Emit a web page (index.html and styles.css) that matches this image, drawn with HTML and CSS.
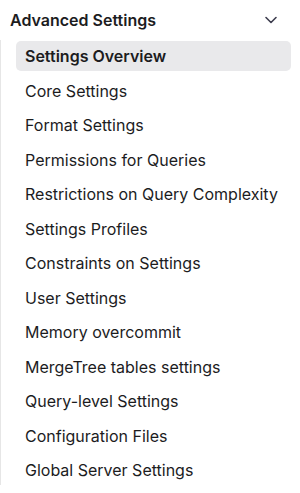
FILE: index.html
```html
<!DOCTYPE html>
<html lang="en">
<head>
  <meta charset="UTF-8">
  <meta name="viewport" content="width=device-width, initial-scale=1.0">
  <title>Advanced Settings</title>
  <link rel="stylesheet" href="styles.css">
</head>
<body>
  <div class="sidebar">
    <div class="group-header">
      <span class="group-title">Advanced Settings</span>
      <svg class="chevron" width="16" height="16" viewBox="0 0 16 16" fill="none">
        <path d="M3 5.5 L8 10.5 L13 5.5" stroke="#3d3d4e" stroke-width="1.6" stroke-linecap="round" stroke-linejoin="round"/>
      </svg>
    </div>
    <ul class="menu">
      <li class="menu-item active">Settings Overview</li>
      <li class="menu-item">Core Settings</li>
      <li class="menu-item">Format Settings</li>
      <li class="menu-item">Permissions for Queries</li>
      <li class="menu-item">Restrictions on Query Complexity</li>
      <li class="menu-item">Settings Profiles</li>
      <li class="menu-item">Constraints on Settings</li>
      <li class="menu-item">User Settings</li>
      <li class="menu-item">Memory overcommit</li>
      <li class="menu-item">MergeTree tables settings</li>
      <li class="menu-item">Query-level Settings</li>
      <li class="menu-item">Configuration Files</li>
      <li class="menu-item">Global Server Settings</li>
    </ul>
  </div>
</body>
</html>
```

FILE: styles.css
```css
body {
  margin: 0;
  padding: 0;
  background: #fff;
  font-family: 'Inter', 'Noto Sans', sans-serif;
  color: #1c1c1e;
}
.sidebar {
  width: 300px;
}
.group-header {
  display: flex;
  justify-content: space-between;
  align-items: center;
  height: 40px;
  padding: 0 21px 0 10px;
  box-sizing: border-box;
}
.group-title {
  font-size: 16px;
  font-weight: 600;
}
.chevron {
  display: block;
}
.menu {
  list-style: none;
  margin: 0;
  padding: 1px 9px 0 15px;
  border-left: 1.5px solid #e6e6e6;
  display: flex;
  flex-direction: column;
  gap: 4.5px;
}
.menu-item {
  height: 30px;
  line-height: 30px;
  padding-left: 9px;
  font-size: 16px;
  border-radius: 5px;
  white-space: nowrap;
}
.menu-item.active {
  background: #e9e9eb;
  font-weight: 600;
}
```
